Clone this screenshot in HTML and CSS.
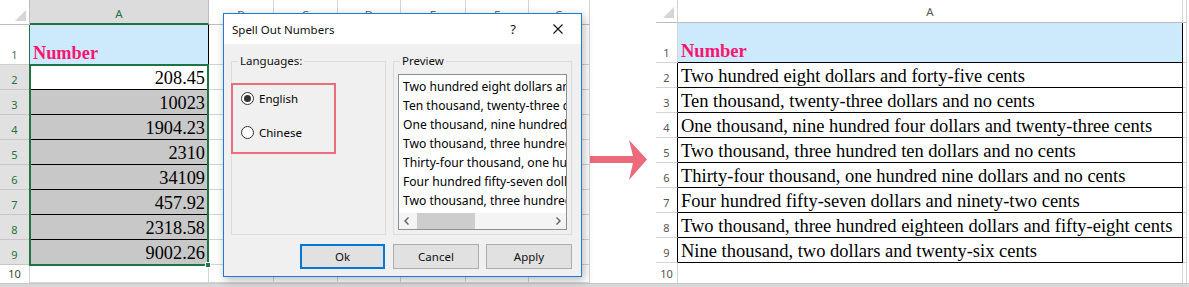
FILE: index.html
```html
<!DOCTYPE html>
<html>
<head>
<meta charset="utf-8">
<link rel="stylesheet" href="styles.css">
</head>
<body>
<div class="page">
  <div class="sheet sheet-left">
    <div class="c corner"><span class="tri"></span></div>
    <div class="c ch ch-sel">A</div>
    <div class="c ch">B</div>
    <div class="c ch">C</div>
    <div class="c ch">D</div>
    <div class="c ch">E</div>
    <div class="c ch">F</div>
    <div class="c ch">G</div>

    <div class="c rh rh-first">1</div>
    <div class="c a a-title"><span class="title-num">Number</span></div>
    <div class="c"></div><div class="c"></div><div class="c"></div><div class="c"></div><div class="c"></div><div class="c"></div>

    <div class="c rh rh-sel">2</div>
    <div class="c a a-num a-active">208.45</div>
    <div class="c"></div><div class="c"></div><div class="c"></div><div class="c"></div><div class="c"></div><div class="c"></div>

    <div class="c rh rh-sel">3</div>
    <div class="c a a-num">10023</div>
    <div class="c"></div><div class="c"></div><div class="c"></div><div class="c"></div><div class="c"></div><div class="c"></div>

    <div class="c rh rh-sel">4</div>
    <div class="c a a-num">1904.23</div>
    <div class="c"></div><div class="c"></div><div class="c"></div><div class="c"></div><div class="c"></div><div class="c"></div>

    <div class="c rh rh-sel">5</div>
    <div class="c a a-num">2310</div>
    <div class="c"></div><div class="c"></div><div class="c"></div><div class="c"></div><div class="c"></div><div class="c"></div>

    <div class="c rh rh-sel">6</div>
    <div class="c a a-num">34109</div>
    <div class="c"></div><div class="c"></div><div class="c"></div><div class="c"></div><div class="c"></div><div class="c"></div>

    <div class="c rh rh-sel">7</div>
    <div class="c a a-num">457.92</div>
    <div class="c"></div><div class="c"></div><div class="c"></div><div class="c"></div><div class="c"></div><div class="c"></div>

    <div class="c rh rh-sel">8</div>
    <div class="c a a-num">2318.58</div>
    <div class="c"></div><div class="c"></div><div class="c"></div><div class="c"></div><div class="c"></div><div class="c"></div>

    <div class="c rh rh-sel">9</div>
    <div class="c a a-num">9002.26</div>
    <div class="c"></div><div class="c"></div><div class="c"></div><div class="c"></div><div class="c"></div><div class="c"></div>

    <div class="c rh rh-last">10</div>
    <div class="c"></div>
    <div class="c"></div><div class="c"></div><div class="c"></div><div class="c"></div><div class="c"></div><div class="c"></div>

    <div class="selbox"><span class="handle"></span></div>

    <div class="dialog">
      <div class="titlebar">
        <span class="dlg-title">Spell Out Numbers</span>
        <span class="help">?</span>
        <svg class="close" width="10" height="10" viewBox="0 0 10 10"><path d="M0.5 0.5 L9.5 9.5 M9.5 0.5 L0.5 9.5" stroke="#111" stroke-width="1.1" fill="none"/></svg>
      </div>
      <div class="dlg-body">
        <div class="groups">
          <fieldset class="grp grp-lang">
            <legend>Languages:</legend>
            <div class="redbox">
              <div class="radio"><span class="dot dot-on"></span><span>English</span></div>
              <div class="radio radio-2"><span class="dot"></span><span>Chinese</span></div>
            </div>
          </fieldset>
          <fieldset class="grp grp-prev">
            <legend>Preview</legend>
            <div class="listbox">
              <div class="lines">
                <div>Two hundred eight dollars and forty-five cents</div>
                <div>Ten thousand, twenty-three dollars and no cents</div>
                <div>One thousand, nine hundred four dollars and twenty-three cents</div>
                <div>Two thousand, three hundred ten dollars and no cents</div>
                <div>Thirty-four thousand, one hundred nine dollars and no cents</div>
                <div>Four hundred fifty-seven dollars and ninety-two cents</div>
                <div>Two thousand, three hundred eighteen dollars and fifty-eight cents</div>
              </div>
              <div class="hscroll">
                <svg class="sarrow" width="16" height="16" viewBox="0 0 16 16"><path d="M9.5 4.5 L6 8 L9.5 11.5" stroke="#606060" stroke-width="1.4" fill="none"/></svg>
                <span class="thumb"></span>
                <span class="track-fill"></span>
                <svg class="sarrow" width="16" height="16" viewBox="0 0 16 16"><path d="M6.5 4.5 L10 8 L6.5 11.5" stroke="#606060" stroke-width="1.4" fill="none"/></svg>
              </div>
            </div>
          </fieldset>
        </div>
        <div class="buttons">
          <div class="btn btn-default">Ok</div>
          <div class="btn btn-cancel">Cancel</div>
          <div class="btn btn-apply">Apply</div>
        </div>
      </div>
    </div>
  </div>

  <div class="spacer">
    <svg class="arrow" width="66" height="283" viewBox="0 0 66 283"><polygon points="-1,156 43,156 39,140 57,159.5 39,180 43,163 -1,163" fill="#ec6a7a"/></svg>
  </div>

  <div class="sheet sheet-right">
    <div class="c2 corner2"><span class="tri"></span></div>
    <div class="c2 ch2">A</div>
    <div class="c2 ch2"></div>

    <div class="c2 rh2">1</div>
    <div class="c2 b b-title"><span class="title-num">Number</span></div>
    <div class="c2"></div>

    <div class="c2 rh2 rh2-dark">2</div>
    <div class="c2 b">Two hundred eight dollars and forty-five cents</div>
    <div class="c2"></div>

    <div class="c2 rh2 rh2-dark">3</div>
    <div class="c2 b">Ten thousand, twenty-three dollars and no cents</div>
    <div class="c2"></div>

    <div class="c2 rh2 rh2-dark">4</div>
    <div class="c2 b">One thousand, nine hundred four dollars and twenty-three cents</div>
    <div class="c2"></div>

    <div class="c2 rh2 rh2-dark">5</div>
    <div class="c2 b">Two thousand, three hundred ten dollars and no cents</div>
    <div class="c2"></div>

    <div class="c2 rh2 rh2-dark">6</div>
    <div class="c2 b">Thirty-four thousand, one hundred nine dollars and no cents</div>
    <div class="c2"></div>

    <div class="c2 rh2 rh2-dark">7</div>
    <div class="c2 b">Four hundred fifty-seven dollars and ninety-two cents</div>
    <div class="c2"></div>

    <div class="c2 rh2 rh2-dark">8</div>
    <div class="c2 b">Two thousand, three hundred eighteen dollars and fifty-eight cents</div>
    <div class="c2"></div>

    <div class="c2 rh2 rh2-dark">9</div>
    <div class="c2 b">Nine thousand, two dollars and twenty-six cents</div>
    <div class="c2"></div>

    <div class="c2 rh2 rh2-last">10</div>
    <div class="c2 last-a"></div>
    <div class="c2 last-b"></div>
  </div>
</div>
<div class="band"></div>
</body>
</html>
```

FILE: styles.css
```css
* { box-sizing: border-box; }
html, body { margin: 0; padding: 0; background: #fff; }
body {
  width: 1189px;
  height: 287px;
  overflow: hidden;
  font-family: "Noto Sans", "DejaVu Sans", sans-serif;
  color: #000;
}
.page { display: flex; height: 283px; }
.band { height: 4px; background: #d8d8d8; border-top: 1px solid #c8c8c8; }

/* ---------- left sheet ---------- */
.sheet { display: grid; position: relative; }
.sheet-left {
  width: 590px;
  grid-template-columns: 30px 179px 65px 64px 63px 65px 63px 61px;
  grid-template-rows: 25px 40px repeat(8, 25px) 18px;
}
.c {
  border-right: 1px solid #d4d4d4;
  border-bottom: 1px solid #d4d4d4;
  min-width: 0;
  overflow: hidden;
}
.corner {
  display: flex;
  justify-content: flex-end;
  align-items: flex-end;
  padding: 0 3px 3px 0;
  border-bottom-color: #bdbdbd;
  border-right-color: #bdbdbd;
}
.tri {
  width: 11px;
  height: 11px;
  background: #d6d6d6;
  clip-path: polygon(100% 0, 100% 100%, 0 100%);
}
.ch {
  display: flex;
  justify-content: center;
  align-items: center;
  font-size: 11.5px;
  color: #666;
  border-bottom-color: #bdbdbd;
  padding-top: 4px;
}
.ch-sel {
  background: #dcdcdc;
  color: #217346;
  border-bottom: 2px solid #217346;
  border-right-color: #bdbdbd;
  padding-top: 3px;
}
.rh {
  display: flex;
  justify-content: center;
  align-items: flex-end;
  font-size: 11px;
  line-height: 13px;
  padding-bottom: 3px;
  color: #555;
  border-bottom-color: #cfcfcf;
}
.rh-first { border-right: 1px solid #217346; color: #5a6b5a; }
.rh-sel {
  background: #e1e1e1;
  color: #217346;
  border-right: 1px solid #217346;
  border-bottom-color: #c6c6c6;
}
.rh-last { color: #444; border-bottom: none; }
.a {
  font-family: "Liberation Serif", "Times New Roman", serif;
  font-size: 18.3px;
  line-height: 20px;
  display: flex;
  align-items: flex-end;
  padding-bottom: 1px;
}
.a-title {
  background: #cdeafc;
  border-right: 1px solid #000;
  border-bottom: 1px solid #000;
  padding-left: 3px;
}
.title-num { font-weight: bold; color: #fb1472; }
.a-num {
  background: #c8c8c8;
  justify-content: flex-end;
  padding-right: 3px;
  border-bottom: 1px solid #000;
  border-right: 1px solid #000;
}
.a-active { background: #fff; }
.selbox {
  position: absolute;
  left: 29px;
  top: 64px;
  width: 180px;
  height: 202px;
  border: 2px solid #217346;
}
.handle {
  position: absolute;
  right: -4px;
  bottom: -4px;
  width: 6px;
  height: 6px;
  background: #217346;
  border: 1px solid #fff;
}

/* ---------- dialog ---------- */
.dialog {
  position: absolute;
  left: 223px;
  top: 13px;
  width: 359px;
  height: 264px;
  border: 1px solid #1c7dd3;
  background: #f0f0f0;
  box-shadow: 2px 3px 9px rgba(0, 0, 0, 0.28);
  display: flex;
  flex-direction: column;
  font-size: 11.5px;
}
.titlebar {
  height: 30px;
  background: #fff;
  display: flex;
  align-items: center;
  padding-left: 8px;
  flex: none;
}
.dlg-title { flex: 1; font-size: 11.5px; color: #111; }
.help { width: 12px; text-align: center; font-size: 13px; margin-right: 34px; color: #111; }
.close { margin-right: 18px; display: block; }
.dlg-body {
  flex: 1;
  padding: 10px 9px 0 7px;
  display: flex;
  flex-direction: column;
}
.groups { display: flex; gap: 7px; height: 181px; }
.grp {
  margin: 0;
  padding: 0;
  border: 1px solid #dcdcdc;
  min-width: 0;
}
.grp legend {
  margin-left: 6px;
  padding: 0 2px;
  line-height: 14px;
  font-size: 11.5px;
  color: #111;
}
.grp-lang { width: 155px; }
.grp-prev { width: 179px; }
.redbox {
  margin: 15px 0 0 -1px;
  width: 105px;
  height: 71px;
  border: 2px solid #e8707c;
  padding: 4px 0 0 8px;
}
.radio {
  display: flex;
  align-items: center;
  gap: 5px;
  height: 18px;
  font-size: 11.5px;
}
.radio-2 { margin-top: 16px; }
.dot {
  width: 13px;
  height: 13px;
  border: 1px solid #333;
  border-radius: 50%;
  background: #fff;
  display: flex;
  align-items: center;
  justify-content: center;
}
.dot-on::after {
  content: "";
  width: 7px;
  height: 7px;
  border-radius: 50%;
  background: #333;
}
.listbox {
  margin: 6px 0 0 4px;
  width: 169px;
  height: 156px;
  border: 1px solid #8a8f98;
  background: #fff;
  display: flex;
  flex-direction: column;
}
.lines {
  flex: 1;
  overflow: hidden;
  padding: 1.5px 0 0 4px;
  line-height: 19px;
  white-space: nowrap;
  font-size: 12.1px;
}
.hscroll {
  height: 16px;
  flex: none;
  display: flex;
  background: #f4f4f4;
}
.sarrow { display: block; flex: none; }
.thumb { width: 58px; height: 16px; background: #cdcdcd; margin-left: 2px; }
.track-fill { flex: 1; }
.buttons {
  display: flex;
  justify-content: flex-end;
  margin-top: 9px;
}
.btn {
  height: 25px;
  width: 86px;
  background: #e1e1e1;
  border: 1px solid #adadad;
  display: flex;
  align-items: center;
  justify-content: center;
  font-size: 11.5px;
  color: #111;
}
.btn-default { width: 85px; border: 2px solid #0078d7; }
.btn-cancel { margin-left: 8px; }
.btn-apply { margin-left: 7px; }

/* ---------- arrow ---------- */
.spacer { width: 66px; flex: none; }
.arrow { display: block; overflow: visible; }

/* ---------- right sheet ---------- */
.sheet-right {
  width: 531px;
  flex: none;
  grid-template-columns: 22px 505px 4px;
  grid-template-rows: 23px 40px repeat(8, 25px) 20px;
}
.c2 {
  border-right: 1px solid #d4d4d4;
  border-bottom: 1px solid #d4d4d4;
  min-width: 0;
  overflow: hidden;
}
.corner2 {
  display: flex;
  justify-content: flex-end;
  align-items: flex-end;
  padding: 0 3px 4px 0;
  border-bottom-color: #bdbdbd;
}
.ch2 {
  display: flex;
  justify-content: center;
  align-items: center;
  font-size: 11.5px;
  color: #595959;
  border-bottom-color: #bdbdbd;
  padding-top: 1px;
}
.rh2 {
  display: flex;
  justify-content: center;
  align-items: flex-end;
  font-size: 11px;
  line-height: 13px;
  padding-bottom: 3px;
  color: #555;
}
.rh2-dark { border-right-color: #000; }
.rh2-last { border-bottom: none; }
.b {
  font-family: "Liberation Serif", "Times New Roman", serif;
  font-size: 18.5px;
  line-height: 20px;
  display: flex;
  align-items: flex-end;
  padding: 0 0 1px 3px;
  white-space: nowrap;
  border-right: 1px solid #000;
  border-bottom: 1px solid #000;
}
.b-title { background: #cdeafc; }
.last-a, .last-b { border-bottom: none; }
```
